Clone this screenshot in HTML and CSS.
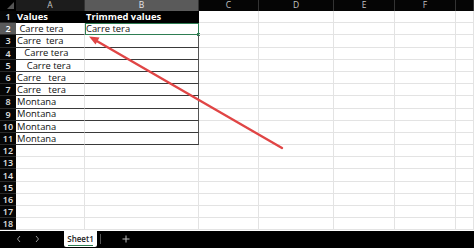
FILE: index.html
```html
<!DOCTYPE html>
<html>
<head>
<meta charset="utf-8">
<link rel="stylesheet" href="styles.css">
</head>
<body>
<div class="app">
  <div class="sheet">
    <div class="corner"><svg width="7" height="7" viewBox="0 0 7 7"><polygon points="7,0 7,7 0,7" fill="#555"/></svg></div>
    <div class="ch cha">A</div><div class="ch chs">B</div><div class="ch">C</div><div class="ch">D</div><div class="ch">E</div><div class="ch">F</div><div class="ch"></div>

    <div class="rh">1</div><div class="c hd">Values</div><div class="c hd">Trimmed values</div><div class="c"></div><div class="c"></div><div class="c"></div><div class="c"></div><div class="c"></div>
    <div class="rh rhs">2</div><div class="c d"> Carre tera</div><div class="c d db sel">Carre tera</div><div class="c"></div><div class="c"></div><div class="c"></div><div class="c"></div><div class="c"></div>
    <div class="rh">3</div><div class="c d">Carre  tera</div><div class="c d db"></div><div class="c"></div><div class="c"></div><div class="c"></div><div class="c"></div><div class="c"></div>
    <div class="rh">4</div><div class="c d">   Carre tera</div><div class="c d db"></div><div class="c"></div><div class="c"></div><div class="c"></div><div class="c"></div><div class="c"></div>
    <div class="rh">5</div><div class="c d">    Carre tera</div><div class="c d db"></div><div class="c"></div><div class="c"></div><div class="c"></div><div class="c"></div><div class="c"></div>
    <div class="rh">6</div><div class="c d">Carre   tera</div><div class="c d db"></div><div class="c"></div><div class="c"></div><div class="c"></div><div class="c"></div><div class="c"></div>
    <div class="rh">7</div><div class="c d">Carre   tera</div><div class="c d db"></div><div class="c"></div><div class="c"></div><div class="c"></div><div class="c"></div><div class="c"></div>
    <div class="rh">8</div><div class="c d">Montana</div><div class="c d db"></div><div class="c"></div><div class="c"></div><div class="c"></div><div class="c"></div><div class="c"></div>
    <div class="rh">9</div><div class="c d">Montana</div><div class="c d db"></div><div class="c"></div><div class="c"></div><div class="c"></div><div class="c"></div><div class="c"></div>
    <div class="rh">10</div><div class="c d">Montana</div><div class="c d db"></div><div class="c"></div><div class="c"></div><div class="c"></div><div class="c"></div><div class="c"></div>
    <div class="rh">11</div><div class="c d">Montana</div><div class="c d db"></div><div class="c"></div><div class="c"></div><div class="c"></div><div class="c"></div><div class="c"></div>
    <div class="rh">12</div><div class="c"></div><div class="c"></div><div class="c"></div><div class="c"></div><div class="c"></div><div class="c"></div><div class="c"></div>
    <div class="rh">13</div><div class="c"></div><div class="c"></div><div class="c"></div><div class="c"></div><div class="c"></div><div class="c"></div><div class="c"></div>
    <div class="rh">14</div><div class="c"></div><div class="c"></div><div class="c"></div><div class="c"></div><div class="c"></div><div class="c"></div><div class="c"></div>
    <div class="rh">15</div><div class="c"></div><div class="c"></div><div class="c"></div><div class="c"></div><div class="c"></div><div class="c"></div><div class="c"></div>
    <div class="rh">16</div><div class="c"></div><div class="c"></div><div class="c"></div><div class="c"></div><div class="c"></div><div class="c"></div><div class="c"></div>
    <div class="rh">17</div><div class="c"></div><div class="c"></div><div class="c"></div><div class="c"></div><div class="c"></div><div class="c"></div><div class="c"></div>
    <div class="rh">18</div><div class="c"></div><div class="c"></div><div class="c"></div><div class="c"></div><div class="c"></div><div class="c"></div><div class="c"></div>
  </div>
  <div class="tabs">
    <span class="nav"><svg width="6" height="8" viewBox="0 0 6 8"><polyline points="4,1 1.5,4 4,7" fill="none" stroke="#9a9a9a" stroke-width="1"/></svg></span>
    <span class="nav"><svg width="6" height="8" viewBox="0 0 6 8"><polyline points="2,1 4.5,4 2,7" fill="none" stroke="#9a9a9a" stroke-width="1"/></svg></span>
    <span class="tab">Sheet1</span>
    <span class="sep"></span>
    <span class="plus"><svg width="8" height="8" viewBox="0 0 8 8"><path d="M4 0.5V7.5M0.5 4H7.5" stroke="#bdbdbd" stroke-width="1"/></svg></span>
  </div>
  <svg class="arrow" width="474" height="248" viewBox="0 0 474 248">
    <line x1="282" y1="148" x2="95" y2="40" stroke="#e04545" stroke-width="2.4" stroke-linecap="round"/>
    <polygon points="89,36.5 99.5,37.5 95.5,44.5" fill="#e04545"/>
  </svg>
</div>
</body>
</html>
```
FILE: styles.css
```css
html, body {
  margin: 0;
  padding: 0;
  background: #fff;
}
.app {
  position: relative;
  width: 474px;
  height: 248px;
  overflow: hidden;
  font-family: "Open Sans", "Noto Sans", sans-serif;
  font-size: 9.4px;
  color: #111;
  display: flex;
  flex-direction: column;
}
.sheet {
  display: grid;
  grid-template-columns: 16px 69px 114px 60px 75px 61px 61px 1fr;
  grid-template-rows: 11px repeat(18, 12.2px);
  height: 230.6px;
}
.corner {
  background: #000;
  display: flex;
  align-items: flex-end;
  justify-content: flex-end;
  padding: 0 2px 2px 0;
  box-sizing: border-box;
}
.ch {
  background: #050505;
  color: #c4c4c4;
  font-size: 8.5px;
  display: flex;
  align-items: center;
  justify-content: center;
  border-right: 1px solid #333;
  box-sizing: border-box;
  line-height: 1;
}
.cha { background: #1c1c1c; }
.chs { background: #5a5a5a; color: #e6e6e6; }
.rh {
  background: #050505;
  color: #e2e2e2;
  font-size: 9px;
  font-weight: 600;
  display: flex;
  align-items: center;
  justify-content: center;
  border-bottom: 1px solid #2a2a2a;
  box-sizing: border-box;
  line-height: 1;
}
.rhs { background: #5a5a5a; color: #fff; }
.c {
  box-sizing: border-box;
  border-right: 1px solid #e3e3e3;
  border-bottom: 1px solid #e3e3e3;
  white-space: pre;
  padding-left: 1px;
  display: flex;
  align-items: center;
  line-height: 1;
  position: relative;
  overflow: visible;
}
.hd {
  background: #000;
  color: #fff;
  font-weight: 700;
  border-right-color: #000;
  border-bottom-color: #000;
}
.d { border-bottom-color: #3a3a3a; }
.db { border-right-color: #555; }
.sel { outline: 1px solid #2e7d52; outline-offset: -1px; }
.sel::after {
  content: "";
  position: absolute;
  right: -2px;
  bottom: -2px;
  width: 3px;
  height: 3px;
  background: #2e7d52;
}
.tabs {
  flex: 1;
  background: #000;
  display: flex;
  align-items: flex-start;
}
.nav {
  width: 18px;
  height: 16px;
  display: flex;
  align-items: center;
  justify-content: center;
}
.nav:first-child { margin-left: 10px; }
.tab {
  margin-left: 18px;
  width: 33px;
  height: 16px;
  background: #fff;
  color: #222;
  font-weight: 600;
  font-size: 8px;
  display: flex;
  align-items: center;
  justify-content: center;
  border-radius: 0 0 2px 2px;
  box-sizing: border-box;
  position: relative;
}
.tab::after {
  content: "";
  position: absolute;
  left: 4px;
  right: 4px;
  bottom: 1px;
  height: 1px;
  background: #2e7d52;
}
.sep {
  width: 1px;
  height: 10px;
  margin: 3px 0 0 3px;
  background: #555;
}
.plus {
  margin-left: 21px;
  height: 16px;
  display: flex;
  align-items: center;
}
.arrow {
  position: absolute;
  left: 0;
  top: 0;
  pointer-events: none;
}
```
